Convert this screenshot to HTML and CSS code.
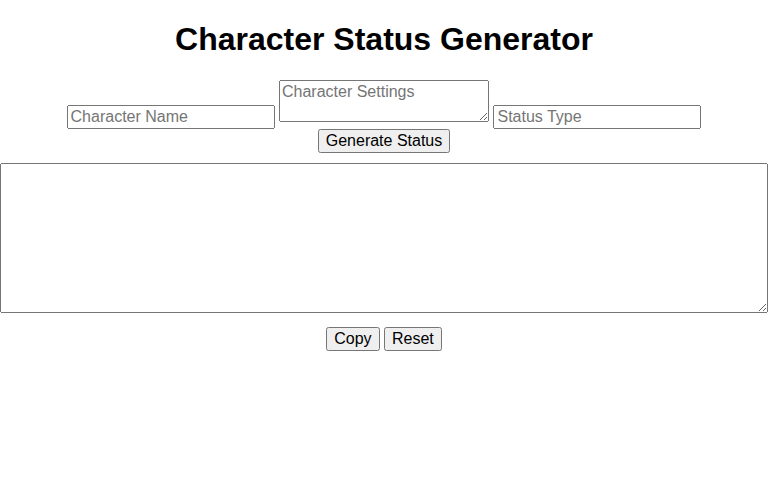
FILE: index.html
```html
<!DOCTYPE html>
<html lang="en">
<head>
<meta charset="utf-8">
<title>Character Status Generator</title>
<link rel="stylesheet" href="styles.css">
</head>
<body>
<h1 class="title">Character Status Generator</h1>
<div class="form">
  <input class="field" type="text" placeholder="Character Name">
  <textarea class="settings" placeholder="Character Settings"></textarea>
  <input class="field" type="text" placeholder="Status Type"><br>
  <button class="btn">Generate Status</button>
</div>
<textarea class="output"></textarea>
<div class="actions">
  <button class="btn">Copy</button>
  <button class="btn">Reset</button>
</div>
</body>
</html>
```
FILE: styles.css
```css
body {
  margin: 0;
  font-family: "Liberation Sans", Arial, sans-serif;
  background: #fff;
  color: #000;
}
.title {
  text-align: center;
  font-size: 32px;
  font-weight: bold;
  margin: 21px 0 22px;
}
.form {
  text-align: center;
}
.field, .settings, .btn, .output {
  font-family: "Liberation Sans", Arial, sans-serif;
  font-size: 16px;
}
.field {
  width: 208px;
  height: 24px;
  box-sizing: border-box;
}
.settings {
  width: 210px;
  height: 42px;
  box-sizing: border-box;
  vertical-align: baseline;
}
.output {
  display: block;
  width: 100%;
  height: 150px;
  box-sizing: border-box;
  margin: 10px 0 0;
}
.actions {
  text-align: center;
  margin-top: 14px;
}
```
